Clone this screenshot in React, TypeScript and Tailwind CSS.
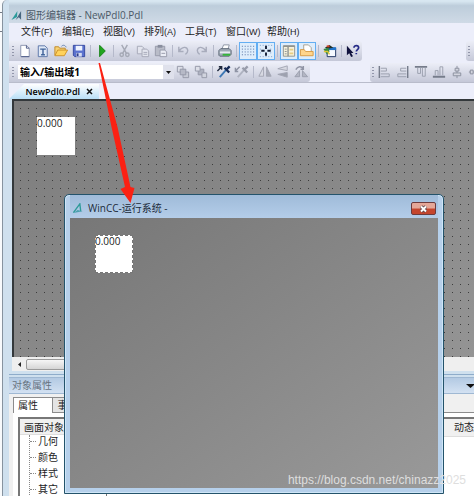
import React from "react";

const menus = ["文件(F)", "编辑(E)", "视图(V)", "排列(A)", "工具(T)", "窗口(W)", "帮助(H)"];
const treeItems = ["几何", "颜色", "样式", "其它"];

const icons: Record<string, React.ReactNode> = {
  新建: (
    <>
      <path d="M4 2.500h6l3 3v9H4z" fill="#fff" stroke="#8a93b0" />
      <path d="M10 2.500v3h3M4.500 14.500h8.500" fill="none" stroke="#4d5a86" />
    </>
  ),
  模板: (
    <>
      <path d="M3.500 3h7l2.500 2.500v9h-9.500z" fill="#dfe8f6" stroke="#5a74a8" />
      <path d="M5.500 6.500h6M8.500 6.500v6M6.500 12.500h4" stroke="#3f6299" strokeWidth="1.500" />
    </>
  ),
  打开: (
    <>
      <path d="M2 13V4h4l1 1.500h6V8" fill="#f7d374" stroke="#c08a28" />
      <path d="M2 13.500 5 7.500h10.500l-3.500 6z" fill="#ffd25c" stroke="#cf9229" />
      <path d="M9 3.500c2-2 4-1 5 1" fill="none" stroke="#5f7fae" />
    </>
  ),
  保存: (
    <>
      <path d="M2.500 2.500h12v12H4l-1.500-1.500z" fill="#5b72ce" stroke="#3447a0" />
      <path d="M5 3h7v5H5z" fill="#eef3ff" />
      <path d="M5.500 10.500h6v4h-6z" fill="#d5dcf2" />
      <path d="M6 11h2v3H6z" fill="#2e3d87" />
    </>
  ),
  运行: <path d="M6 2.500v12l6-6z" fill="#21a51f" stroke="#158015" />,
  剪切: (
    <g fill="none" stroke="#a5a9b5" strokeWidth="1.500">
      <path d="M5 2l5 9M11 2 6 11" />
      <circle cx="5" cy="12.500" r="1.800" />
      <circle cx="11" cy="12.500" r="1.800" />
    </g>
  ),
  复制: (
    <g fill="#e3e5ee" stroke="#a5a9b7">
      <path d="M2.500 3.500h5l2 2v6h-7z" />
      <path d="M7.500 6.500h5l2 2v6h-7zM9 10h4M9 12h4" />
    </g>
  ),
  粘贴: (
    <>
      <path d="M2.500 3.500h10v10h-10z" fill="#b9bcc8" stroke="#969aaa" />
      <path d="M5 2h5v3H5z" fill="#898e9e" />
      <path d="M7.500 7.500h5l2 2v5h-7zM9 11h4" fill="#ebedf5" stroke="#969aaa" />
    </>
  ),
  撤消: (
    <path d="M3 4v5h5M3.500 8.500C6 4 12 3 12.500 8c0 2-1 3-2.500 4" fill="none" stroke="#a8acbc" strokeWidth="1.500" />
  ),
  恢复: (
    <path d="M13 4v5H8M12.500 8.500C10 4 4 3 3.500 8c0 2 1 3 2.500 4" fill="none" stroke="#a8acbc" strokeWidth="1.500" />
  ),
  打印: (
    <>
      <path d="M5 7l2-5h6l-1.500 5z" fill="#fff" stroke="#8b93a3" />
      <path d="M2 8l2-2h9l2 2v4l-2 2H3l-1-1z" fill="#a0aab6" stroke="#5b6674" />
      <path d="M3 9h11v2H3z" fill="#e6ebf0" />
      <path d="M6 12.500h8" stroke="#36b53a" strokeWidth="2" />
    </>
  ),
  网格: (
    <path
      d="M2 3.500h13M2 6.500h13M2 9.500h13M2 12.500h13"
      stroke="#46649a"
      strokeDasharray="1 2"
    />
  ),
  对齐网格: (
    <>
      <path d="M2 2.500h13M2 14.500h13M2 6.500h2M13 6.500h2M2 10.500h2M13 10.500h2" stroke="#7696c4" strokeDasharray="1 2" />
      <path d="M8.500 3v3.500M8.500 10v3.500M3.500 8.300H7M10 8.300h3.500" stroke="#111c33" strokeWidth="2" />
    </>
  ),
  属性: (
    <>
      <path d="M2.500 3h12v11h-12z" fill="#f7f2dc" stroke="#8f938f" />
      <path d="M2.500 3.500h12M7.500 3v11" stroke="#8f938f" strokeWidth="1.500" />
      <path d="M4 6.500h2M4 9h2M4 11.500h2" stroke="#879094" />
      <path d="M9 6h4v2H9zM9 10h4v2H9z" fill="#e8cd83" />
    </>
  ),
  库: (
    <>
      <path d="M5 9V2h5l3 3v5" fill="#fff" stroke="#a6a091" />
      <path d="M1.500 13.500V7h4l1.500 2h8v4.500z" fill="#ffd58c" stroke="#d99b43" />
    </>
  ),
  画面: (
    <>
      <path d="M5.500 5.500h9v9h-9z" fill="#f5f9ff" stroke="#1b315f" />
      <path d="M5 6h10" stroke="#2173c8" strokeWidth="3" />
      <path d="M3 5l5-3 4 3-6 1z" fill="#202f25" />
      <path d="M1.500 6.500 7 5l1 4-3 3z" fill="#328845" />
      <path d="M2 9h4l2 3" fill="none" stroke="#e1c635" strokeWidth="1.500" />
      <path d="M5 2.500h3v2H5z" fill="#d34428" />
    </>
  ),
  帮助: (
    <>
      <path d="M2 3v10l2.500-2 2 4 2-1-2-3.500H9z" fill="#10123c" />
      <path d="M9.500 5c0-3 5-3 5 0 0 2-2.500 2-2.500 4M12 10.500v1.500" fill="none" stroke="#252a87" strokeWidth="1.800" />
    </>
  ),
  前置: (
    <g stroke="#9498a8">
      <path d="M8.500 8.500h6v6h-6z" fill="#c6c9d4" />
      <path d="M2.500 2.500h6v6h-6z" fill="#dddfe8" />
      <path d="M5.500 5.500h6v6h-6z" fill="#b6b9c6" />
    </g>
  ),
  后置: (
    <g stroke="#9498a8">
      <path d="M5.500 5.500h6v6h-6z" fill="#aeb2c0" />
      <path d="M2.500 2.500h5v5h-5z" fill="#dddfe8" />
      <path d="M9.500 9.500h5v5h-5z" fill="#d1d4de" />
    </g>
  ),
  拾取: (
    <>
      <path d="M1.500 7.500 6 3M3 3h3v3" fill="none" stroke="#20293d" strokeWidth="1.500" />
      <path d="M4 14 11 6" stroke="#3d78b5" strokeWidth="2" />
      <path d="M9 4l5 5M11 6l3.500-3.500" stroke="#172c58" strokeWidth="2.500" />
    </>
  ),
  应用: (
    <>
      <path d="M1.500 7.500 6 3M1.500 4v4h3" fill="none" stroke="#8f94a5" strokeWidth="1.500" />
      <path d="M4 14 11 6" stroke="#afb3c1" strokeWidth="2" />
      <path d="M9 4l5 5M11 6l3.500-3.500" stroke="#999dab" strokeWidth="2.500" />
    </>
  ),
  水平镜像: (
    <g stroke="#a2a5b3">
      <path d="M7 3v10H2z" fill="#d7d9e2" />
      <path d="M10 3v10h5z" fill="#a6a9b6" />
    </g>
  ),
  垂直镜像: (
    <g stroke="#a2a5b3">
      <path d="M13 2v5L3 5z" fill="#d7d9e2" />
      <path d="M13 14V9L3 11z" fill="#9da1af" />
    </g>
  ),
  旋转: (
    <>
      <path d="M3 6c2-4 6-4 8-1M11 2v3.500H8" fill="none" stroke="#9195a5" strokeWidth="1.500" />
      <path d="M7 7v6.500H2zM10 7v6.500h5.500z" fill="#b3b6c3" stroke="#9b9fad" />
    </>
  ),
  左对齐: (
    <>
      <path d="M2.500 2v13" stroke="#767c8b" strokeWidth="1.500" />
      <path d="M4 4.500h6v3H4M4 10.500h9v3H4" fill="none" stroke="#9a9fad" />
    </>
  ),
  右对齐: (
    <>
      <path d="M13.500 2v13" stroke="#767c8b" strokeWidth="1.500" />
      <path d="M12 4.500H6v3h6M12 10.500H3v3h9" fill="none" stroke="#9a9fad" />
    </>
  ),
  顶对齐: (
    <>
      <path d="M2 3h13" stroke="#767c8b" strokeWidth="2" />
      <path d="M5 4v6h3V4M10 4v9h3V4" fill="none" stroke="#9a9fad" />
    </>
  ),
  底对齐: (
    <>
      <path d="M2 13.500h13" stroke="#767c8b" strokeWidth="2" />
      <path d="M4.500 12V7h3v5M9.500 12V3h3v9" fill="none" stroke="#9a9fad" />
    </>
  ),
  水平居中: (
    <>
      <path d="M8.500 2v13" stroke="#8a8f9d" />
      <path d="M6.500 4.500h4v3h-4zM4.500 9.500h8v3h-8z" fill="#d3d5df" stroke="#8a8f9d" />
    </>
  ),
  垂直居中: (
    <>
      <path d="M2 8.500h13" stroke="#8a8f9d" />
      <path d="M3.500 6.500h3v4h-3zM9.500 4.500h3v8h-3z" fill="#d3d5df" stroke="#8a8f9d" />
    </>
  ),
};

const Tool = ({ name, active }: { name: string; active?: boolean }) => (
  <button
    type="button"
    aria-label={name}
    className={
      active
        ? "flex h-[18px] w-[18px] shrink-0 items-center justify-center border border-[#63aef2] bg-[#deedfb]"
        : "flex h-[18px] w-[18px] shrink-0 items-center justify-center"
    }
  >
    <svg viewBox="0 0 17 17" className="h-4 w-4 shrink-0">{icons[name]}</svg>
  </button>
);

const Sep = () => <span className="mx-0.5 h-3 w-px shrink-0 bg-[#b5b9ca]" />;

const Grip = () => (
  <span className="mx-0.5 h-[11px] w-0.5 shrink-0 bg-[repeating-linear-gradient(#9296aa_0_1px,transparent_1px_3px)]" />
);

const Logo = ({ className }: { className: string }) => (
  <svg viewBox="0 0 12 12" className={className}>
    <path d="M0.500 11 7 1 6.500 7.500z" fill="#2c9a9b" />
    <path d="M5 11 11 1v9.500L8.500 8z" fill="#46667f" />
  </svg>
);

const IoField = ({ className }: { className: string }) => (
  <div className={`h-[38px] w-[38px] bg-white text-[10px] leading-[12px] text-[#222] ${className}`}>0.000</div>
);

const RuntimeWindow = () => (
  <section className="absolute top-[194px] left-16 flex h-[300px] w-[380px] flex-col rounded-t-[5px] border border-[#24536b] bg-[#b6d0eb] px-[5px] pb-[5px] shadow-[inset_0_0_0_1px_#cfe6f7]">
    <header className="flex h-[23px] shrink-0 items-center bg-linear-to-b from-[#9fbbd9] to-[#b4cde9] px-0.5 pt-1">
      <svg viewBox="0 0 12 12" className="h-[11px] w-3">
        <path d="M1 10.500 8 1l1 8" fill="none" stroke="#2e9a98" strokeWidth="1.500" />
        <path d="M1 11 5.500 7.500 11 9z" fill="#4c9fae" />
      </svg>
      <h2 className="ml-1 text-[10px] text-[#1c2b3a]">WinCC-运行系统 -</h2>
      <button
        type="button"
        aria-label="关闭"
        className="ml-auto flex h-[13px] w-[25px] items-center justify-center rounded-[2px] border border-[#6d3a3c] bg-linear-to-b from-[#e5a798] from-45% to-[#c4452d] to-55%"
      >
        <svg viewBox="0 0 9 8" className="h-2 w-[9px]">
          <path d="M2 1.500 7 6.500M7 1.500 2 6.500" stroke="#59434a" strokeWidth="3.500" />
          <path d="M2 1.500 7 6.500M7 1.500 2 6.500" stroke="#fff" strokeWidth="2" />
        </svg>
      </button>
    </header>
    <div className="flex-1 bg-linear-to-br from-[#777777] to-[#999999] pt-[17px] pl-[25px]">
      <IoField className="outline-1 -outline-offset-1 outline-dashed outline-[#777]" />
    </div>
  </section>
);

const App = () => {
  return (
    <div className="relative flex min-h-screen overflow-hidden bg-[#f8fafc] font-['Open_Sans','Noto_Sans_CJK_SC',sans-serif] text-[10px] text-[#1c1c24]">
      {/* Edge of the window behind */}
      <div className="w-0.5 shrink-0">
        <div className="mt-3 h-5 border-y border-[#747b86]" />
      </div>
      <main className="flex min-w-0 flex-1 flex-col rounded-tl-[5px] border-l border-[#87939f] bg-[#cfe0ee] pl-[6px]">
        <header className="flex h-[23px] shrink-0 items-center gap-1 bg-linear-to-b from-[#d8e7f1] from-5% via-[#bdcddb] via-25% to-[#cfdae6] pt-[7px] pl-0.5">
          <Logo className="h-[11px] w-[11px]" />
          <h1 className="text-[10px] text-[#4b5967]">图形编辑器 - NewPdl0.Pdl</h1>
        </header>

        <div className="bg-[#eceefa]">
          <nav className="flex h-[18px] items-center pl-3">
            {menus.map((m) => (
              <button key={m} type="button" className="w-[41px] shrink-0 text-left whitespace-nowrap">
                {m.slice(0, 2)}
                <span className="font-['Liberation_Sans',sans-serif] text-[9px]">{m.slice(2)}</span>
              </button>
            ))}
          </nav>

          <div className="flex h-[21px] items-start">
            <div className="flex h-5 shrink-0 items-center rounded-r-[3px] bg-linear-to-b from-[#eceef7] to-[#c5c8d8] pl-px">
              <Grip />
              <Tool name="新建" />
              <Tool name="模板" />
              <Tool name="打开" />
              <Tool name="保存" />
              <Sep />
              <Tool name="运行" />
              <Sep />
              <Tool name="剪切" />
              <Tool name="复制" />
              <Tool name="粘贴" />
              <Sep />
              <Tool name="撤消" />
              <Tool name="恢复" />
              <Sep />
              <Tool name="打印" />
              <Sep />
              <Tool name="网格" active />
              <Tool name="对齐网格" active />
              <Sep />
              <Tool name="属性" active />
              <Tool name="库" active />
              <Sep />
              <Tool name="画面" />
              <Sep />
              <Tool name="帮助" />
            </div>
            <div className="ml-auto flex h-5 w-2 items-center rounded-l-[3px] bg-linear-to-b from-[#eceef7] to-[#c5c8d8]">
              <Grip />
            </div>
          </div>

          <div className="flex h-5 items-center overflow-hidden">
            <div className="flex h-[19px] shrink-0 items-center rounded-r-[3px] bg-linear-to-b from-[#eceef7] to-[#c5c8d8] pl-px">
              <Grip />
              <div className="relative ml-0.5 flex">
                <select
                  aria-label="对象"
                  className="h-[14px] w-[156px] appearance-none bg-white pl-0.5 text-[10px] leading-[14px] font-bold text-black"
                >
                  <option>输入/输出域1</option>
                </select>
                <span className="pointer-events-none absolute inset-y-0 right-0 flex w-[11px] items-center justify-center bg-[#dfe1ec]">
                  <svg viewBox="0 0 5 3" className="h-[3px] w-[5px]">
                    <path d="M0 0h5L2.500 3z" fill="#111" />
                  </svg>
                </span>
              </div>
              <Tool name="前置" />
              <Tool name="后置" />
              <Sep />
              <Tool name="拾取" />
              <Tool name="应用" />
              <Sep />
              <Tool name="水平镜像" />
              <Tool name="垂直镜像" />
              <Tool name="旋转" />
            </div>
            <div className="ml-[60px] flex h-[19px] min-w-0 flex-1 items-center overflow-hidden rounded-l-[3px] bg-linear-to-b from-[#eceef7] to-[#c5c8d8]">
              <Grip />
              <Tool name="左对齐" />
              <Tool name="右对齐" />
              <Tool name="顶对齐" />
              <Tool name="底对齐" />
              <Tool name="水平居中" />
              <Tool name="垂直居中" />
            </div>
          </div>

          <div className="flex h-[17px] items-end border-t border-[#b9bccb]">
            <div className="flex h-[15px] w-[90px] items-center justify-end gap-1 bg-linear-to-b from-white to-[#b9dff7] pr-1 [clip-path:polygon(0_100%,15px_0,100%_0,100%_100%)]">
              <span className="text-[9px] font-semibold text-black">NewPdl0.Pdl</span>
              <button type="button" aria-label="关闭" className="p-0.5">
                <svg viewBox="0 0 7 7" className="h-[7px] w-[7px]">
                  <path d="M1 1l5 5M6 1 1 6" stroke="#111" strokeWidth="1.500" />
                </svg>
              </button>
            </div>
          </div>
        </div>

        {/* Drawing area */}
        <div className="ml-[3px] border-t-2 border-l-2 border-[#33383b] bg-linear-to-br from-[#7d7d7d] to-[#949494]">
          <div className="h-64 bg-[conic-gradient(from_270deg_at_1px_1px,#3c3c3c_90deg,transparent_0)] bg-size-[8px_8px] bg-position-[6px_7px] pt-4 pl-[23px]">
            <IoField className="" />
          </div>
        </div>
        <div className="ml-[3px] flex h-[14px] items-center bg-[#efefef]">
          <span className="flex w-[14px] justify-center">
            <svg viewBox="0 0 3 5" className="h-[5px] w-[3px]">
              <path d="M3 0v5L0 2.500z" fill="#222" />
            </svg>
          </span>
          <span className="mr-16 h-[11px] flex-1 rounded-[2px] border border-[#9a9a9a] bg-linear-to-b from-[#f6f6f6] to-[#d5d5d5]" />
        </div>
        <div className="mt-[3px] h-px bg-[#8eacca]" />

        {/* Object properties */}
        <div className="mt-0.5 flex h-[17px] items-center justify-between border-y border-[#9fb8d3] bg-linear-to-b from-[#b3cae3] to-[#d3e1f2] pl-[3px]">
          <h2 className="text-[10px] text-[#66727f]">对象属性</h2>
          <svg viewBox="0 0 8 4" className="h-1 w-2">
            <path d="M0 0h8v1L4.500 4z" fill="#111" />
          </svg>
        </div>
        <div className="flex flex-1 flex-col bg-[#f0f0f0] pt-[3px] pl-1">
          <div role="tablist" className="flex h-4 border-b border-[#8c8c8c]">
            <button
              type="button"
              role="tab"
              aria-selected="true"
              className="-mb-px h-4 w-10 border border-b-0 border-[#8c8c8c] bg-white pr-2.5"
            >
              属性
            </button>
            <button
              type="button"
              role="tab"
              aria-selected="false"
              className="h-[15px] w-10 border-t border-r border-[#8c8c8c] bg-[#e4e4e4] pr-2.5"
            >
              事件
            </button>
          </div>
          <div className="flex flex-1 bg-white pt-1 pl-[5px]">
            <div className="w-[88px] shrink-0 border-t-2 border-l-2 border-[#777]">
              <div className="h-4 border-b border-[#ddd] bg-[#f0f0f0] pl-1 leading-4">画面对象</div>
              <ul className="ml-[9px] flex flex-col gap-1 border-l border-dotted border-[#888]">
                {treeItems.map((t) => (
                  <li key={t} className="flex h-3 items-center gap-0.5 leading-3">
                    <span className="w-1.5 border-t border-dotted border-[#888]" />
                    {t}
                  </li>
                ))}
              </ul>
            </div>
            <div className="min-w-0 flex-1 overflow-hidden border-t-2 border-l border-[#777]">
              <table className="w-full">
                <thead>
                  <tr className="h-[17px] border-b border-[#ddd] bg-[#f0f0f0]">
                    <th className="p-0 text-right font-normal">动态</th>
                  </tr>
                </thead>
              </table>
            </div>
          </div>
        </div>
      </main>

      <RuntimeWindow />

      {/* Pointer from the run button to the runtime window */}
      <svg viewBox="0 0 40 142" className="pointer-events-none absolute top-[62px] left-24 h-[142px] w-10">
        <path d="M2.500 1h1.500L21.500 65 34.500 125l4 1-4 15-10-14 4.500-2L15.500 65z" fill="#fb2113" />
      </svg>
      <p className="pointer-events-none absolute right-2 bottom-2 font-['Liberation_Sans',sans-serif] text-[12px] leading-4 text-[#dedede]">
        https://blog.csdn.net/chinazz2025
      </p>
    </div>
  );
};

export default App;
